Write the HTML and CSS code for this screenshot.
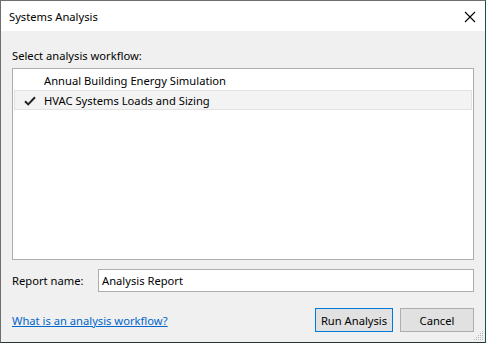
FILE: index.html
```html
<!DOCTYPE html>
<html>
<head>
<meta charset="utf-8">
<link rel="stylesheet" href="styles.css">
</head>
<body>
<div class="window">
  <div class="titlebar">
    <span class="title">Systems Analysis</span>
    <svg class="close" width="12" height="12" viewBox="0 0 12 12"><path d="M1 1 L11 11 M11 1 L1 11" stroke="#000" stroke-width="1.1" fill="none"/></svg>
  </div>
  <div class="content">
    <div class="label">Select analysis workflow:</div>
    <div class="listbox">
      <div class="item"><span class="check"></span><span>Annual Building Energy Simulation</span></div>
      <div class="item selected"><span class="check"><svg width="12" height="10" viewBox="0 0 12 10"><path d="M1 5.2 L4.2 8.4 L11 1.2" stroke="#222" stroke-width="2" fill="none"/></svg></span><span>HVAC Systems Loads and Sizing</span></div>
    </div>
    <div class="report-row">
      <span class="report-label">Report name:</span>
      <div class="input">Analysis Report</div>
    </div>
    <div class="footer">
      <a class="link" href="#">What is an analysis workflow?</a>
      <div class="buttons">
        <div class="btn default">Run Analysis</div>
        <div class="btn">Cancel</div>
      </div>
    </div>
    <svg class="grip" width="10" height="10" viewBox="0 0 10 10">
      <g fill="#b8b8b8">
        <rect x="8" y="0" width="1" height="1"/>
        <rect x="6" y="2" width="1" height="1"/><rect x="8" y="2" width="1" height="1"/>
        <rect x="4" y="4" width="1" height="1"/><rect x="6" y="4" width="1" height="1"/><rect x="8" y="4" width="1" height="1"/>
        <rect x="2" y="6" width="1" height="1"/><rect x="4" y="6" width="1" height="1"/><rect x="6" y="6" width="1" height="1"/><rect x="8" y="6" width="1" height="1"/>
        <rect x="0" y="8" width="1" height="1"/><rect x="2" y="8" width="1" height="1"/><rect x="4" y="8" width="1" height="1"/><rect x="6" y="8" width="1" height="1"/><rect x="8" y="8" width="1" height="1"/>
      </g>
    </svg>
  </div>
</div>
</body>
</html>
```
FILE: styles.css
```css
html, body {
  margin: 0;
  padding: 0;
}
body {
  font-family: "Segoe UI", "Noto Sans", "Liberation Sans", sans-serif;
  font-size: 11.2px;
  color: #000;
}
.window {
  width: 486px;
  height: 343px;
  box-sizing: border-box;
  border: 1px solid #6e6e6e;
  border-right-color: #1b4f4f;
  border-bottom-color: #263838;
  display: flex;
  flex-direction: column;
  position: relative;
  background: linear-gradient(to right, #707070 0, #707070 247px, #1a6b6b 247px) top / 100% 1px no-repeat;
}
.titlebar {
  height: 30px;
  background: #fff;
  display: flex;
  align-items: center;
  justify-content: space-between;
  padding: 0 8px 0 8px;
}
.title {
  line-height: 16px;
  padding-top: 1px;
}
.close {
  margin-right: 1px;
  margin-top: 1px;
}
.content {
  flex: 1;
  background: #f0f0f0;
  padding: 17px 11px 10px 11px;
  display: flex;
  flex-direction: column;
  position: relative;
}
.label {
  line-height: 16px;
  height: 16px;
  margin-bottom: 4px;
}
.listbox {
  height: 192px;
  box-sizing: border-box;
  border: 1px solid #adadad;
  background: #fff;
  padding: 1px 1px;
  display: flex;
  flex-direction: column;
}
.item {
  height: 20px;
  box-sizing: border-box;
  display: flex;
  align-items: center;
  border: 1px solid transparent;
  line-height: 16px;
  padding-top: 1px;
}
.item.selected {
  background: #f3f3f3;
  border-color: #e2e2e2;
}
.check {
  width: 29px;
  display: flex;
  justify-content: flex-start;
  padding-left: 9px;
  box-sizing: border-box;
}
.check svg {
  display: block;
}
.report-row {
  display: flex;
  align-items: center;
  margin-top: 9px;
  height: 23px;
}
.report-label {
  width: 86px;
}
.input {
  flex: 1;
  height: 23px;
  box-sizing: border-box;
  border: 1px solid #adadad;
  background: #fff;
  padding: 0 3px;
  display: flex;
  align-items: center;
}
.footer {
  display: flex;
  align-items: center;
  justify-content: space-between;
  margin-top: 16px;
}
.link {
  color: #0066cc;
  text-decoration: underline;
}
.buttons {
  display: flex;
  gap: 7px;
}
.btn {
  height: 24px;
  box-sizing: border-box;
  border: 1px solid #adadad;
  background: #e1e1e1;
  display: flex;
  align-items: center;
  justify-content: center;
  width: 74px;
}
.btn.default {
  border: 1px solid #0078d7;
  width: 78px;
}
.grip {
  position: absolute;
  right: 1px;
  bottom: 1px;
}
```
